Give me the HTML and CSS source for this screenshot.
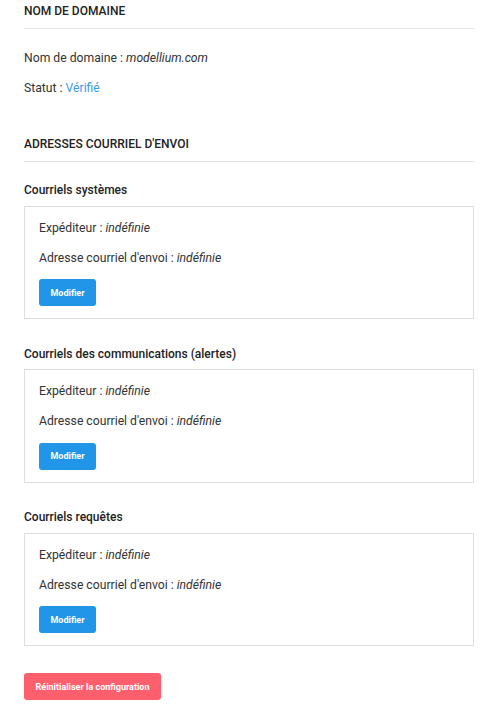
FILE: index.html
```html
<!DOCTYPE html>
<html lang="fr">
<head>
<meta charset="utf-8">
<link rel="stylesheet" href="styles.css">
</head>
<body>
<div class="page">
  <h2 class="section-title first">NOM DE DOMAINE</h2>
  <p class="row r1">Nom de domaine : <em>modellium.com</em></p>
  <p class="row">Statut : <span class="link">Vérifié</span></p>

  <h2 class="section-title second">ADRESSES COURRIEL D'ENVOI</h2>

  <h3 class="sub first-sub">Courriels systèmes</h3>
  <div class="card">
    <p class="row">Expéditeur : <em>indéfinie</em></p>
    <p class="row">Adresse courriel d'envoi : <em>indéfinie</em></p>
    <button class="btn btn-blue">Modifier</button>
  </div>

  <h3 class="sub">Courriels des communications (alertes)</h3>
  <div class="card">
    <p class="row">Expéditeur : <em>indéfinie</em></p>
    <p class="row">Adresse courriel d'envoi : <em>indéfinie</em></p>
    <button class="btn btn-blue">Modifier</button>
  </div>

  <h3 class="sub">Courriels requêtes</h3>
  <div class="card">
    <p class="row">Expéditeur : <em>indéfinie</em></p>
    <p class="row">Adresse courriel d'envoi : <em>indéfinie</em></p>
    <button class="btn btn-blue">Modifier</button>
  </div>

  <button class="btn btn-red">Réinitialiser la configuration</button>
</div>
</body>
</html>
```
FILE: styles.css
```css
html, body {
  margin: 0;
  padding: 0;
  background: #ffffff;
}
body {
  font-family: Roboto, "Liberation Sans", sans-serif;
  color: #333333;
  font-size: 12.2px;
}
.page {
  width: 450px;
  padding: 3px 0 0 24px;
}
.section-title {
  margin: 0;
  font-size: 12px;
  font-weight: 500;
  line-height: 17px;
  color: #222222;
  padding-bottom: 8px;
  border-bottom: 1px solid #e2e2e2;
}
.section-title.second {
  margin-top: 39px;
}
.row {
  margin: 0;
  line-height: 17px;
}
.row + .row {
  margin-top: 13px;
}
.r1 {
  margin-top: 21px;
}
em {
  font-style: italic;
}
.link {
  color: #3a9be8;
}
.sub {
  margin: 26.5px 0 6.5px;
  font-size: 12px;
  font-weight: 500;
  line-height: 17px;
  color: #222222;
}
.sub.first-sub {
  margin-top: 20px;
}
.card {
  border: 1px solid #dedede;
  padding: 13px 14px 12px;
}
.btn {
  display: block;
  border: none;
  border-radius: 3px;
  font-family: Roboto, "Liberation Sans", sans-serif;
  font-size: 9px;
  font-weight: 700;
  color: #ffffff;
  height: 27px;
  cursor: pointer;
}
.btn-blue {
  margin-top: 12.5px;
  width: 57px;
  padding: 0;
  background: #2196e8;
}
.btn-red {
  margin-top: 27px;
  width: 137px;
  padding: 0;
  background: #fd5f6c;
}
```
